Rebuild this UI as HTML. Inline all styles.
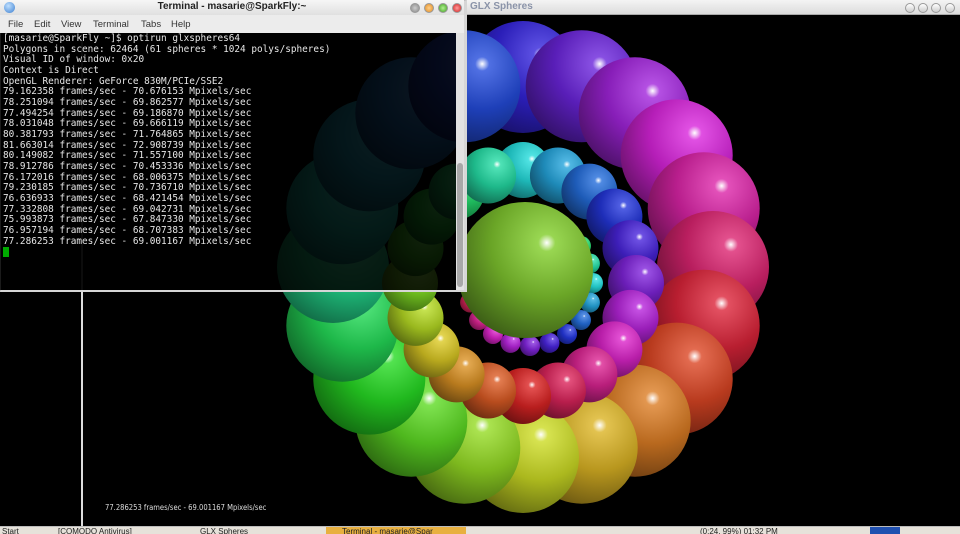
<!DOCTYPE html>
<html><head><meta charset="utf-8"><style>
*{margin:0;padding:0;box-sizing:border-box}
body{width:960px;height:534px;overflow:hidden;background:#000;position:relative;font-family:"Liberation Sans",sans-serif}
.abs{position:absolute}
#glxbar{left:0;top:0;width:960px;height:15px;background:linear-gradient(#f4f4f4,#dcdcdc);border-bottom:1px solid #aaa}
#glxbar span{position:absolute;left:470px;top:1px;font-size:10px;font-weight:bold;color:#8a93a8}
.btn{position:absolute;top:3px;width:10px;height:10px;border-radius:50%;border:1px solid #999;background:linear-gradient(#fff,#ccc)}
#term{left:0;top:0;width:467px;height:292px;border:1px solid #bbb;border-right:3px solid #d6d6d6;border-bottom:2px solid #d6d6d6}
#ttitle{left:0;top:0;width:464px;height:15px;background:linear-gradient(#f6f6f6,#e0e0e0)}
#ttitle b{position:absolute;left:0;width:464px;text-align:center;top:1px;font-size:10px;color:#222}
#menu{left:0;top:15px;width:464px;height:18px;background:#ececec;font-size:9.5px;color:#333}
#menu span{position:absolute;top:4px}
#tc{left:0;top:33px;width:456px;height:257px;background:rgba(0,0,0,.86);font-family:"DejaVu Sans Mono","Liberation Mono",monospace;font-size:9.4px;line-height:10.67px;color:#e6e6e6;padding:1px 0 0 3px;white-space:pre}
#sb{left:456px;top:33px;width:8px;height:257px;background:#e2e2e2}
#thumb{left:457px;top:163px;width:6px;height:124px;background:#a8a8a8;border-radius:3px}
#task{left:0;top:526px;width:960px;height:8px;background:#e6e2da;border-top:1px solid #bbb;font-size:8px;color:#222;overflow:hidden}
#task span{position:absolute;top:0}
</style></head><body>
<svg class="abs" style="left:0;top:0" width="960" height="534" id="sv"></svg>
<div class="abs" style="left:81px;top:290px;width:2px;height:236px;background:#ddd"></div>
<div class="abs" style="left:81px;top:33px;width:2px;height:257px;background:#555"></div>
<div class="abs" style="left:105px;top:503px;font-size:8px;color:#ddd;font-family:'DejaVu Sans',sans-serif;transform:scaleX(.85);transform-origin:left">77.286253 frames/sec - 69.001167 Mpixels/sec</div>
<div id="glxbar" class="abs"><span>GLX Spheres</span>
<div class="btn" style="left:905px"></div><div class="btn" style="left:918px"></div><div class="btn" style="left:931px"></div><div class="btn" style="left:945px"></div></div>
<div id="term" class="abs"></div>
<div id="ttitle" class="abs"><div class="abs" style="left:4px;top:2px;width:11px;height:11px;border-radius:50%;background:radial-gradient(circle at 40% 35%,#bfe0ff,#3d7fd0)"></div><b>Terminal - masarie@SparkFly:~</b>
<div class="btn" style="left:410px;background:radial-gradient(#ccc,#888)"></div><div class="btn" style="left:424px;background:radial-gradient(#ffd08a,#e08a20)"></div><div class="btn" style="left:438px;background:radial-gradient(#b0f090,#40a020)"></div><div class="btn" style="left:452px;background:radial-gradient(#ff9a9a,#d02020)"></div></div>
<div id="menu" class="abs"><span style="left:8px">File</span><span style="left:34px">Edit</span><span style="left:61px">View</span><span style="left:93px">Terminal</span><span style="left:141px">Tabs</span><span style="left:171px">Help</span></div>
<div id="tc" class="abs">[masarie@SparkFly ~]$ optirun glxspheres64
Polygons in scene: 62464 (61 spheres * 1024 polys/spheres)
Visual ID of window: 0x20
Context is Direct
OpenGL Renderer: GeForce 830M/PCIe/SSE2
79.162358 frames/sec - 70.676153 Mpixels/sec
78.251094 frames/sec - 69.862577 Mpixels/sec
77.494254 frames/sec - 69.186870 Mpixels/sec
78.031048 frames/sec - 69.666119 Mpixels/sec
80.381793 frames/sec - 71.764865 Mpixels/sec
81.663014 frames/sec - 72.908739 Mpixels/sec
80.149082 frames/sec - 71.557100 Mpixels/sec
78.912786 frames/sec - 70.453336 Mpixels/sec
76.172016 frames/sec - 68.006375 Mpixels/sec
79.230185 frames/sec - 70.736710 Mpixels/sec
76.636933 frames/sec - 68.421454 Mpixels/sec
77.332808 frames/sec - 69.042731 Mpixels/sec
75.993873 frames/sec - 67.847330 Mpixels/sec
76.957194 frames/sec - 68.707383 Mpixels/sec
77.286253 frames/sec - 69.001167 Mpixels/sec
<span style="display:inline-block;width:6px;height:10px;background:#0a0"></span></div>
<div id="sb" class="abs"></div><div id="thumb" class="abs"></div>
<div id="task" class="abs"><span style="left:2px">Start</span><span style="left:58px">[COMODO Antivirus]</span><span style="left:200px">GLX Spheres</span><span style="left:326px;width:140px;height:8px;background:#e8b040;padding-left:16px">Terminal - masarie@Spar</span><span style="left:700px">(0:24, 99%) 01:32 PM</span><span style="left:870px;width:30px;height:8px;background:#2050b0"></span></div>
<script>
var s=document.getElementById('sv'),h='<defs>',b='',id=0;
function sph(x,y,r,hue,l,sat){id++;sat=sat||72;
h+='<radialGradient id="g'+id+'" cx="0.66" cy="0.3" r="0.9"><stop offset="0" stop-color="#fff"/><stop offset="0.07" stop-color="hsl('+hue+','+sat+'%,'+(l+18)+'%)"/><stop offset="0.45" stop-color="hsl('+hue+','+sat+'%,'+l+'%)"/><stop offset="1" stop-color="hsl('+hue+','+sat+'%,'+(l-24)+'%)"/></radialGradient>';
b+='<circle cx="'+x+'" cy="'+y+'" r="'+r+'" fill="url(#g'+id+')"/>';}
function ring(cx,cy,R,r,n,h0,l){for(var i=0;i<n;i++){var a=-Math.PI/2+i*2*Math.PI/n;var hue=(h0+i*360/n)%360;sph(cx+R*Math.cos(a),cy+R*Math.sin(a),r,hue,l);}}
ring(523,267,190,56,20,245,42);
ring(523,283,113,28,20,180,42);
ring(530,283,63,10,20,90,44);
sph(525,270,68,88,40,62);
s.innerHTML=h+'</defs>'+b;
</script>
</body></html>
